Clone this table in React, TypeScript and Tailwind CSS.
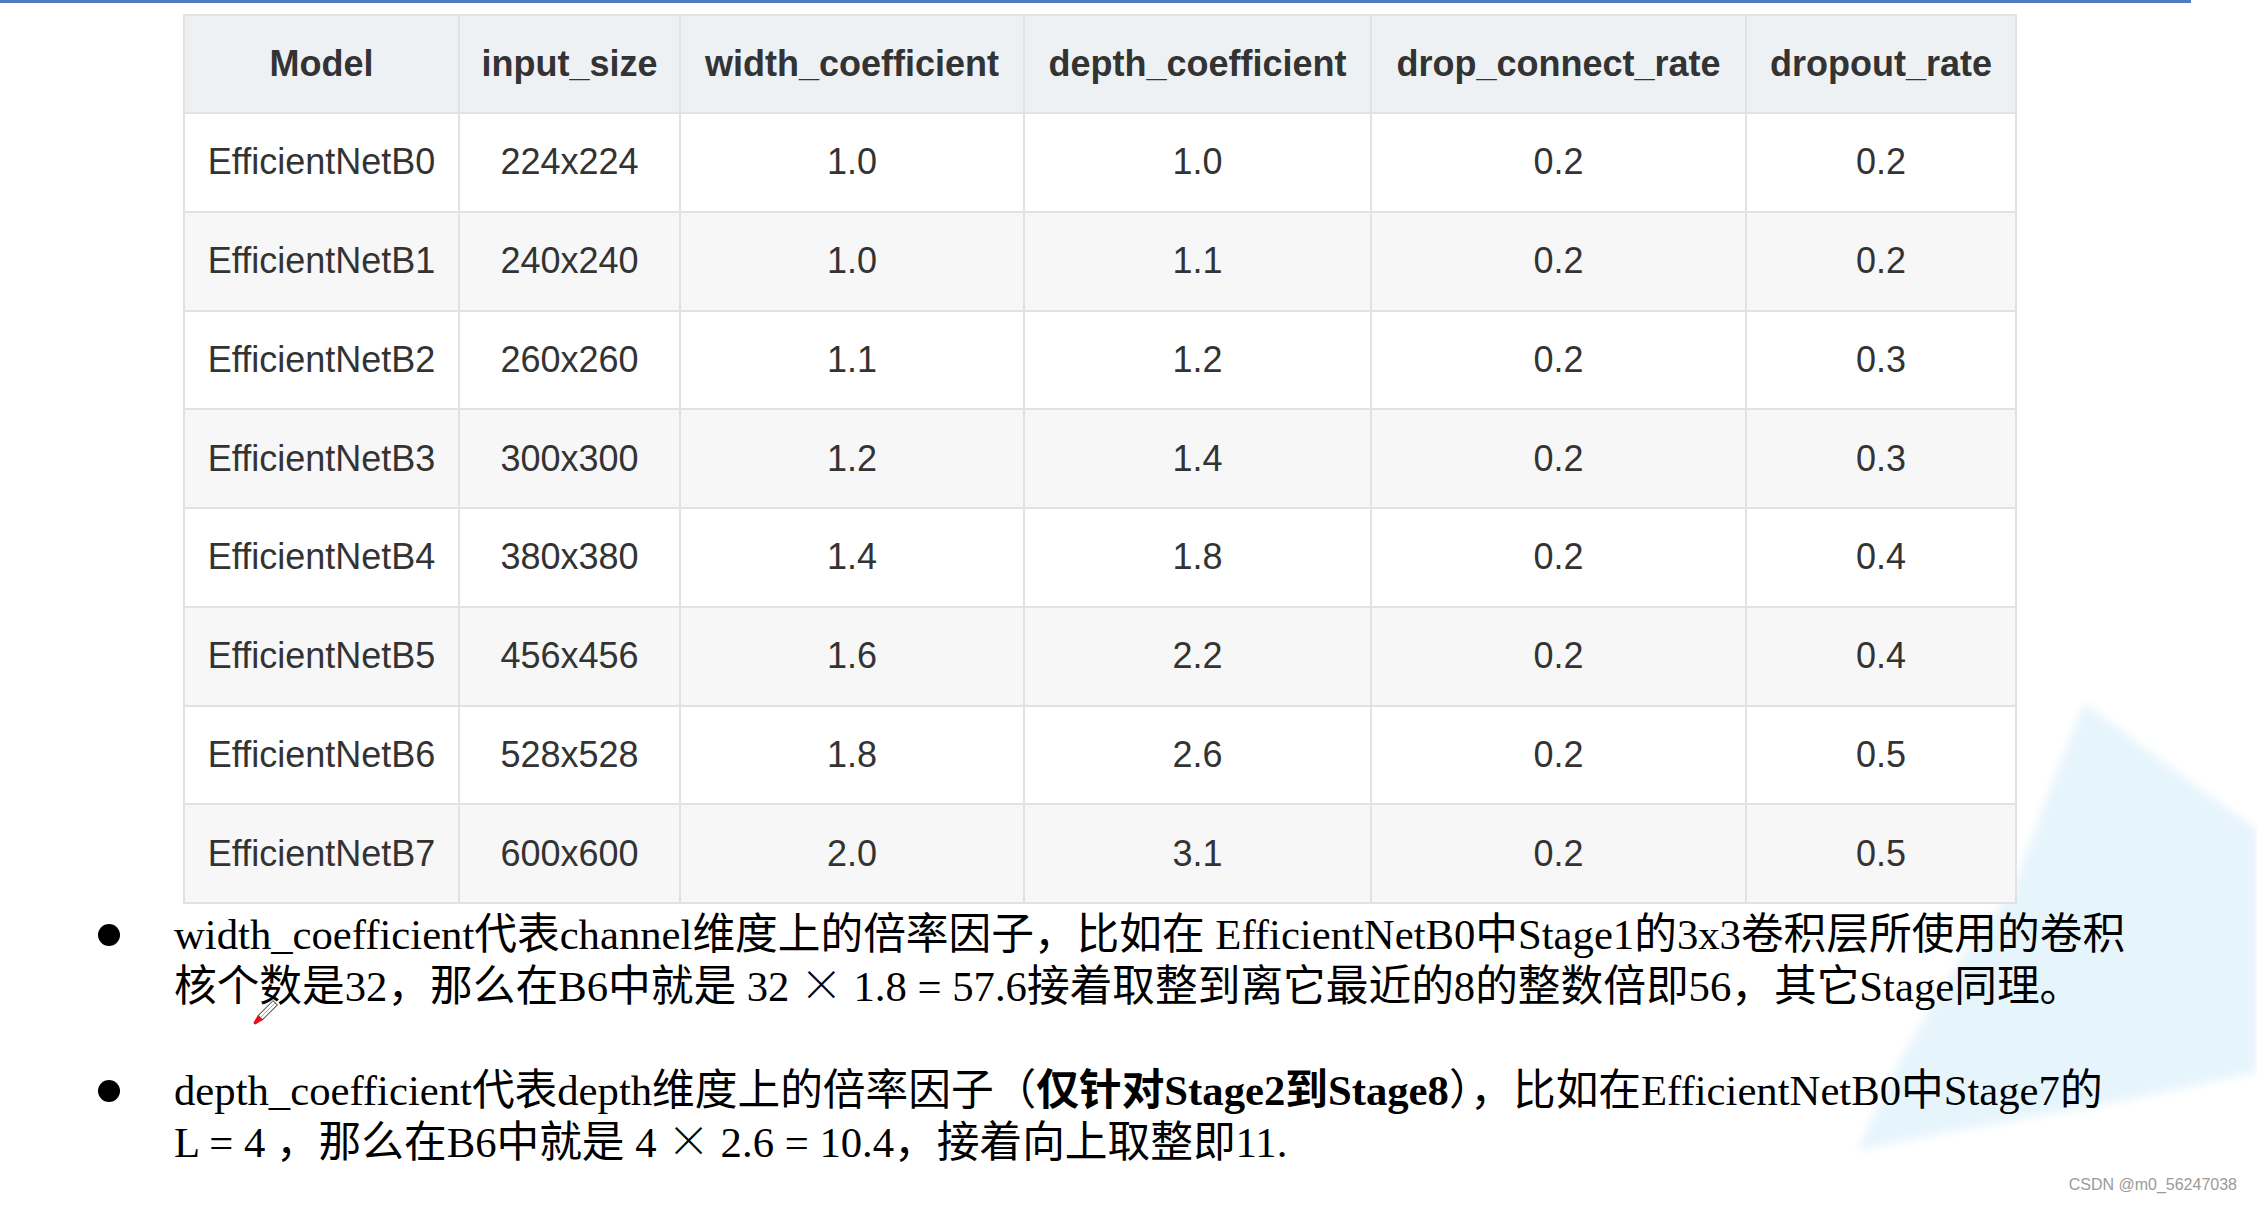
const headers = ['Model', 'input_size', 'width_coefficient', 'depth_coefficient', 'drop_connect_rate', 'dropout_rate'];

const colWidths = ['w-[275px]', 'w-[221px]', 'w-[344px]', 'w-[347px]', 'w-[375px]', 'w-[270px]'];

const rows = [
  ['EfficientNetB0', '224x224', '1.0', '1.0', '0.2', '0.2'],
  ['EfficientNetB1', '240x240', '1.0', '1.1', '0.2', '0.2'],
  ['EfficientNetB2', '260x260', '1.1', '1.2', '0.2', '0.3'],
  ['EfficientNetB3', '300x300', '1.2', '1.4', '0.2', '0.3'],
  ['EfficientNetB4', '380x380', '1.4', '1.8', '0.2', '0.4'],
  ['EfficientNetB5', '456x456', '1.6', '2.2', '0.2', '0.4'],
  ['EfficientNetB6', '528x528', '1.8', '2.6', '0.2', '0.5'],
  ['EfficientNetB7', '600x600', '2.0', '3.1', '0.2', '0.5'],
];

function Bullet({ children }: { children: React.ReactNode }) {
  return (
    <div className="flex">
      <div className="flex h-[52px] w-[174px] items-center pl-[98px]">
        <span className="block h-[22px] w-[22px] rounded-full bg-black" />
      </div>
      <div className="whitespace-nowrap">{children}</div>
    </div>
  );
}

// the multiplication sign is the wide one from the CJK font
function Times() {
  return <span className="font-['Noto_Sans_CJK_SC',sans-serif] font-light leading-none">×</span>;
}

function PenCursor() {
  return (
    <svg className="absolute left-[248px] top-[996px]" width="32" height="32" viewBox="0 0 32 32">
      <g transform="translate(6 28) rotate(45)">
        <rect x="-3" y="-30" width="6" height="21" fill="#ffffff" stroke="#555" strokeWidth="1" />
        <line x1="0" y1="-30" x2="0" y2="-9" stroke="#999" strokeWidth="0.8" />
        <path d="M-3.5 -9 L3.5 -9 L1.5 -1 Q0 1 -1.5 -1 Z" fill="#e3101a" />
      </g>
    </svg>
  );
}

export default function App() {
  return (
    <div className="relative h-[1205px] w-[2257px] overflow-hidden bg-white">
      {/* watercolor decoration behind the text */}
      <svg className="absolute left-0 top-0" width="2257" height="1205" viewBox="0 0 2257 1205">
        <defs>
          <filter id="soft" x="-10%" y="-10%" width="120%" height="120%">
            <feGaussianBlur stdDeviation="5" />
          </filter>
        </defs>
        <polygon
          points="2084,703 2160,760 2257,830 2257,1072 2100,1105 1960,1130 1858,1150 1900,1060 1960,960 2013,890 2050,790"
          fill="#e6f4fc"
          filter="url(#soft)"
        />
      </svg>

      <div className="relative">
        <div className="h-[3px] w-[2191px] bg-[#4f7cbf]" />

        <table className="ml-[183px] mt-[11px] w-[1832px] table-fixed border-collapse font-['Liberation_Sans',Arial,sans-serif] text-[36px] text-[#333]">
          <thead>
            <tr className="h-[98px] bg-[#eef1f3]">
              {headers.map((h, i) => (
                <th key={h} className={`${colWidths[i]} border-2 border-[#e2e2e2] text-center font-bold`}>
                  {h}
                </th>
              ))}
            </tr>
          </thead>
          <tbody>
            {rows.map((row, r) => (
              <tr key={row[0]} className={`h-[98.75px] ${r % 2 === 1 ? 'bg-[#f7f7f7]' : 'bg-white'}`}>
                {row.map((cell, c) => (
                  <td key={c} className="border-2 border-[#e2e2e2] text-center font-normal">
                    {cell}
                  </td>
                ))}
              </tr>
            ))}
          </tbody>
        </table>

        <div className="mt-[5px] font-['Liberation_Serif','Noto_Sans_CJK_SC',serif] text-[42.7px] leading-[52px] text-black">
          <Bullet>
            <div>width_coefficient代表channel维度上的倍率因子，比如在 EfficientNetB0中Stage1的3x3卷积层所使用的卷积</div>
            <div>
              核个数是32，那么在B6中就是 32 <Times /> 1.8 = 57.6接着取整到离它最近的8的整数倍即56，其它Stage同理。
            </div>
          </Bullet>
          <div className="h-[52px]" />
          <Bullet>
            <div>
              depth_coefficient代表depth维度上的倍率因子（<span className="font-bold">仅针对Stage2到Stage8</span>），比如在EfficientNetB0中Stage7的
            </div>
            <div>
              L = 4 ，那么在B6中就是 4 <Times /> 2.6 = 10.4，接着向上取整即11.
            </div>
          </Bullet>
        </div>
      </div>

      <PenCursor />

      <div className="absolute bottom-[8px] right-[20px] font-['Liberation_Sans',Arial,sans-serif] text-[16px] text-[#9a9a9a]">
        CSDN @m0_56247038
      </div>
    </div>
  );
}
